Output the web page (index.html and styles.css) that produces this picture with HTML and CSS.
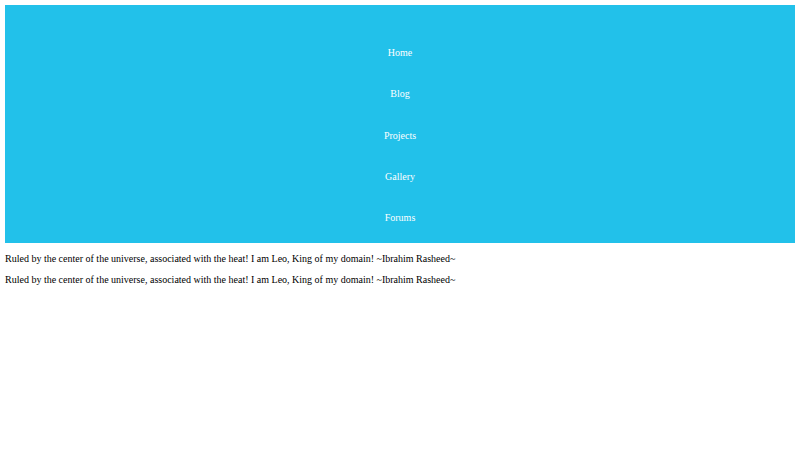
FILE: index.html
```html
<!DOCTYPE html>
<html>
<head>
<meta charset="utf-8">
<link rel="stylesheet" href="styles.css">
</head>
<body>
<nav class="nav">
  <ul class="menu">
    <li class="item">Home</li>
    <li class="item">Blog</li>
    <li class="item">Projects</li>
    <li class="item">Gallery</li>
    <li class="item">Forums</li>
  </ul>
</nav>
<p class="quote">Ruled by the center of the universe, associated with the heat! I am Leo, King of my domain! ~Ibrahim Rasheed~</p>
<p class="quote">Ruled by the center of the universe, associated with the heat! I am Leo, King of my domain! ~Ibrahim Rasheed~</p>
</body>
</html>
```
FILE: styles.css
```css
html, body {
  margin: 0;
  padding: 0;
  background: #ffffff;
}
body {
  padding: 5px;
  font-family: "Liberation Serif", "Times New Roman", serif;
  font-size: 10px;
  color: #000000;
}
.nav {
  background: #22c1ea;
  padding: 27px 0 5px;
}
.menu {
  list-style: none;
  margin: 0;
  padding: 0;
}
.item {
  height: 41.25px;
  line-height: 41.25px;
  text-align: center;
  color: #ffffff;
}
.quote {
  margin: 10px 0;
}
```
